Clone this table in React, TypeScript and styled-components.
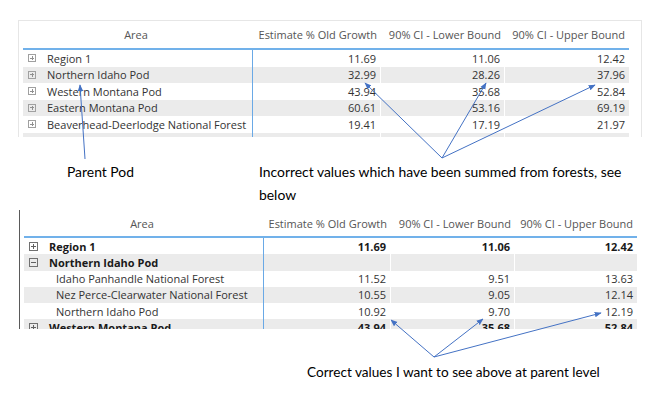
import React from "react";
import styled, { createGlobalStyle } from "styled-components";

const Global = createGlobalStyle`
  html, body { margin: 0; padding: 0; background: #ffffff; }
  #root { width: 666px; height: 398px; }
`;

const Page = styled.div`
  position: relative;
  width: 666px;
  height: 398px;
  overflow: hidden;
  background: #ffffff;
  display: flex;
  flex-direction: column;
`;

const TopShot = styled.div`
  margin: 20px 0 0 18px;
  width: 624px;
  height: 117px;
  border: 1px solid #e6e6e6;
  border-bottom: none;
  padding-left: 4px;
  box-sizing: border-box;
  overflow: hidden;
`;

const BottomShot = styled.div`
  margin: 4px 0 0 19px;
  width: 620px;
  height: 119px;
  border-left: 1px solid #5a5a5a;
  padding-left: 4px;
  box-sizing: border-box;
  overflow: hidden;
`;

const Table = styled.div<{ $cols: string }>`
  display: grid;
  grid-template-columns: ${(p) => p.$cols};
  font-family: "Open Sans", "Noto Sans", sans-serif;
  font-size: 11px;
  color: #333333;
`;

const HeaderCell = styled.div<{ $h: number; $align: "center" | "right" }>`
  height: ${(p) => p.$h}px;
  box-sizing: border-box;
  display: flex;
  align-items: center;
  justify-content: ${(p) => (p.$align === "center" ? "center" : "flex-end")};
  padding: 0 4px 0 0;
  color: #555555;
  border-bottom: 2px solid #71b1ea;
  white-space: nowrap;
`;

const Cell = styled.div<{
  $h: number;
  $shade: boolean;
  $first?: boolean;
  $last?: boolean;
  $bold?: boolean;
  $indent?: number;
}>`
  height: ${(p) => p.$h}px;
  box-sizing: border-box;
  display: flex;
  align-items: center;
  justify-content: ${(p) => (p.$first ? "flex-start" : "flex-end")};
  padding: ${(p) => (p.$first ? `0 0 0 ${p.$indent ?? 5}px` : "0 4px 0 0")};
  background: ${(p) => (p.$shade ? "#ebebeb" : "#ffffff")};
  border-right: ${(p) =>
    p.$first ? "1px solid #6aa9e6" : p.$last ? "none" : "1px solid #ffffff"};
  font-weight: ${(p) => (p.$bold ? 700 : 400)};
  color: ${(p) => (p.$bold ? "#1a1a1a" : "#333333")};
  white-space: nowrap;
`;

const ExpandBox = styled.span<{ $size: number; $dark?: boolean }>`
  position: relative;
  flex: none;
  width: ${(p) => p.$size}px;
  height: ${(p) => p.$size}px;
  box-sizing: border-box;
  border: 1px solid ${(p) => (p.$dark ? "#707070" : "#a0a0a0")};
  margin-right: 11px;
  &::before,
  &::after {
    content: "";
    position: absolute;
    background: ${(p) => (p.$dark ? "#606060" : "#909090")};
  }
  &::before {
    left: 1px;
    right: 1px;
    top: 50%;
    height: 1px;
    margin-top: -0.5px;
  }
`;

const PlusBox = styled(ExpandBox)`
  &::after {
    top: 1px;
    bottom: 1px;
    left: 50%;
    width: 1px;
    margin-left: -0.5px;
  }
`;

const NoteRow = styled.div`
  display: grid;
  grid-template-columns: 192px 366px;
  margin: 23px 0 0 67px;
  font-family: "Lato", "Open Sans", sans-serif;
  font-size: 13.9px;
  line-height: 23px;
  color: #000000;
`;

const NoteLine = styled.div`
  margin: 32px 0 0 307px;
  font-family: "Lato", "Open Sans", sans-serif;
  font-size: 13.6px;
  line-height: 23px;
  color: #000000;
`;

const Overlay = styled.svg`
  position: absolute;
  left: 0;
  top: 0;
  pointer-events: none;
`;

type Row = {
  name: string;
  vals: string[];
  bold?: boolean;
  icon?: "plus" | "minus" | "none";
  indent?: number;
};

const topRows: Row[] = [
  { name: "Region 1", vals: ["11.69", "11.06", "12.42"], icon: "plus" },
  { name: "Northern Idaho Pod", vals: ["32.99", "28.26", "37.96"], icon: "plus" },
  { name: "Western Montana Pod", vals: ["43.94", "35.68", "52.84"], icon: "plus" },
  { name: "Eastern Montana Pod", vals: ["60.61", "53.16", "69.19"], icon: "plus" },
  { name: "Beaverhead-Deerlodge National Forest", vals: ["19.41", "17.19", "21.97"], icon: "plus" },
  { name: "Bitterroot National Forest", vals: ["9.06", "7.65", "10.04"], icon: "plus" },
];

const bottomRows: Row[] = [
  { name: "Region 1", vals: ["11.69", "11.06", "12.42"], bold: true, icon: "plus" },
  { name: "Northern Idaho Pod", vals: ["", "", ""], bold: true, icon: "minus" },
  { name: "Idaho Panhandle National Forest", vals: ["11.52", "9.51", "13.63"], icon: "none", indent: 32 },
  { name: "Nez Perce-Clearwater National Forest", vals: ["10.55", "9.05", "12.14"], icon: "none", indent: 32 },
  { name: "Northern Idaho Pod", vals: ["10.92", "9.70", "12.19"], icon: "none", indent: 32 },
  { name: "Western Montana Pod", vals: ["43.94", "35.68", "52.84"], bold: true, icon: "plus" },
];

const headers = ["Area", "Estimate % Old Growth", "90% CI - Lower Bound", "90% CI - Upper Bound"];

function MatrixTable(props: {
  cols: string;
  headH: number;
  rowH: number;
  rows: Row[];
  box: number;
  dark?: boolean;
}) {
  const { cols, headH, rowH, rows, box, dark } = props;
  return (
    <Table $cols={cols}>
      {headers.map((h, i) => (
        <HeaderCell key={h} $h={headH} $align={i === 0 ? "center" : "right"}>
          {h}
        </HeaderCell>
      ))}
      {rows.map((r, ri) => (
        <React.Fragment key={ri}>
          <Cell $h={rowH} $shade={ri % 2 === 1} $first $bold={r.bold} $indent={r.icon === "none" ? r.indent : 5}>
            {r.icon === "plus" && <PlusBox $size={box} $dark={dark} />}
            {r.icon === "minus" && <ExpandBox $size={box} $dark={dark} />}
            {r.name}
          </Cell>
          {r.vals.map((v, vi) => (
            <Cell key={vi} $h={rowH} $shade={ri % 2 === 1} $last={vi === 2} $bold={r.bold}>
              {v}
            </Cell>
          ))}
        </React.Fragment>
      ))}
    </Table>
  );
}

const Arrow = ({ x1, y1, x2, y2 }: { x1: number; y1: number; x2: number; y2: number }) => (
  <line x1={x1} y1={y1} x2={x2} y2={y2} stroke="#4472c4" strokeWidth={1} markerEnd="url(#head)" />
);

export default function App() {
  return (
    <>
      <Global />
      <Page>
        <TopShot>
          <MatrixTable cols="230px 128px 124px 124px" headH={29} rowH={16.5} rows={topRows} box={8} />
        </TopShot>
        <NoteRow>
          <div>Parent Pod</div>
          <div>Incorrect values which have been summed from forests, see below</div>
        </NoteRow>
        <BottomShot>
          <MatrixTable cols="240px 127px 124px 122px" headH={28} rowH={16.25} rows={bottomRows} box={9} dark />
        </BottomShot>
        <NoteLine>Correct values I want to see above at parent level</NoteLine>
        <Overlay width={666} height={398} viewBox="0 0 666 398">
          <defs>
            <marker id="head" viewBox="0 0 10 10" refX="9" refY="5" markerWidth="7" markerHeight="7" orient="auto-start-reverse" markerUnits="userSpaceOnUse">
              <path d="M0,1 L10,5 L0,9 z" fill="#4472c4" />
            </marker>
          </defs>
          <Arrow x1={85} y1={159} x2={80} y2={85} />
          <Arrow x1={442} y1={158} x2={365} y2={83} />
          <Arrow x1={442} y1={158} x2={486} y2={83} />
          <Arrow x1={442} y1={158} x2={595} y2={85} />
          <Arrow x1={434} y1={357} x2={391} y2={320} />
          <Arrow x1={434} y1={357} x2={483} y2={319} />
          <Arrow x1={434} y1={357} x2={601} y2={313} />
        </Overlay>
      </Page>
    </>
  );
}
